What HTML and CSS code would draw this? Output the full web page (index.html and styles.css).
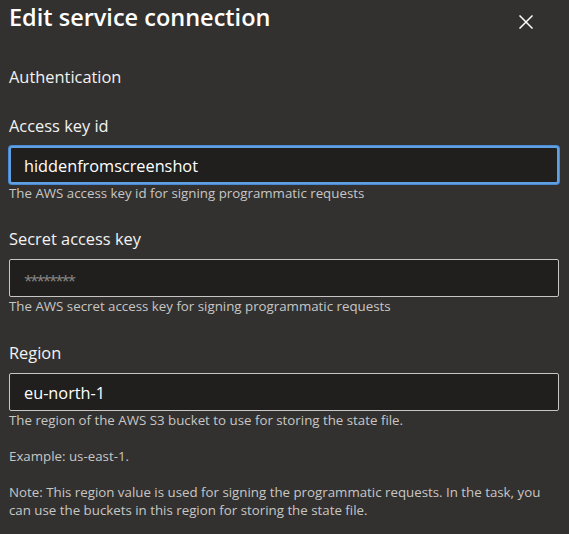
FILE: index.html
```html
<!DOCTYPE html>
<html lang="en">
<head>
<meta charset="utf-8">
<title>Edit service connection</title>
<link rel="stylesheet" href="styles.css">
</head>
<body>
<div class="panel">
  <header class="header">
    <h1 class="title">Edit service connection</h1>
    <button class="close" aria-label="Close">
      <svg width="14" height="14" viewBox="0 0 14 14"><path d="M0.5 0.5 L13.5 13.5 M13.5 0.5 L0.5 13.5" stroke="#ffffff" stroke-width="1.5" fill="none"/></svg>
    </button>
  </header>

  <h2 class="section">Authentication</h2>

  <div class="field">
    <label class="label">Access key id</label>
    <div class="input focused"><span class="value">hiddenfromscreenshot</span></div>
    <div class="help"><p>The AWS access key id for signing programmatic requests</p></div>
  </div>

  <div class="field">
    <label class="label">Secret access key</label>
    <div class="input"><span class="placeholder">********</span></div>
    <div class="help"><p>The AWS secret access key for signing programmatic requests</p></div>
  </div>

  <div class="field">
    <label class="label">Region</label>
    <div class="input"><span class="value">eu-north-1</span></div>
    <div class="help">
      <p>The region of the AWS S3 bucket to use for storing the state file.</p>
      <p>Example: us-east-1.</p>
      <p>Note: This region value is used for signing the programmatic requests. In the task, you can use the buckets in this region for storing the state file.</p>
    </div>
  </div>
</div>
</body>
</html>
```

FILE: styles.css
```css
html, body {
  margin: 0;
  padding: 0;
  background: #323130;
}

body {
  font-family: "Open Sans", "Noto Sans", sans-serif;
  color: #ffffff;
  width: 569px;
  height: 534px;
  overflow: hidden;
}

.panel {
  padding: 1px 10px 0 9px;
}

.header {
  display: flex;
  justify-content: space-between;
  align-items: flex-start;
  height: 32px;
}

.title {
  margin: 0;
  font-size: 23.5px;
  line-height: 32px;
  font-weight: 600;
  color: #ffffff;
}

.close {
  width: 32px;
  height: 32px;
  margin: 5px 17.5px 0 0;
  padding: 0;
  border: 0;
  background: transparent;
  display: flex;
  align-items: center;
  justify-content: center;
}

.close svg {
  display: block;
}

.section {
  margin: 32px 0 0;
  font-size: 16.4px;
  line-height: 24px;
  font-weight: 400;
  color: #f3f2f1;
}

.field {
  margin-top: 26px;
  display: flex;
  flex-direction: column;
}

.field:first-of-type {
  margin-top: 25.5px;
}

.label {
  font-size: 16.4px;
  line-height: 22px;
  color: #f3f2f1;
  margin-bottom: 9px;
}

.input {
  box-sizing: border-box;
  height: 38px;
  border: 1px solid #c8c6c4;
  border-radius: 2px;
  background: #201f1e;
  display: flex;
  align-items: center;
  padding: 0 14px;
}

.input.focused {
  border: 2px solid #5f9fe2;
  box-shadow: 0 0 0 1px #4a8ad4;
  border-radius: 3px;
  padding: 0 13px;
}

.value {
  font-size: 16.3px;
  color: #ffffff;
  line-height: 20px;
  padding-top: 2px;
}

.placeholder {
  font-size: 15px;
  color: #8a8886;
  letter-spacing: -2px;
  padding-top: 3px;
}

.help {
  margin-top: 1px;
  font-size: 13.3px;
  line-height: 17.5px;
  color: #c8c6c4;
}

.help p {
  margin: 0;
}

.help p + p {
  margin-top: 18.75px;
}
```
